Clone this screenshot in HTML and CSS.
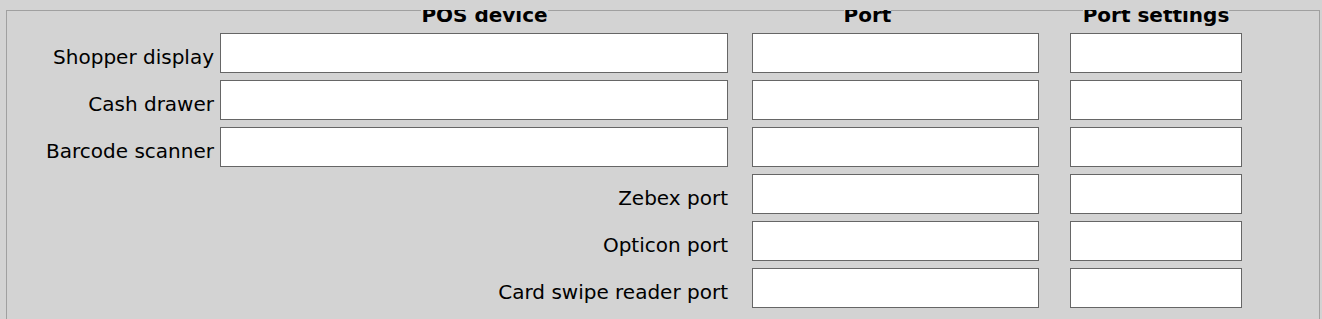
FILE: index.html
```html
<!DOCTYPE html>
<html lang="en">
<head>
  <meta charset="UTF-8" />
  <title>POS devices</title>
  <link rel="stylesheet" href="styles.css">
</head>
<body>
<div class="panel">
  <div class="device-grid">
    <div class="head-blank"></div>
    <div class="head head-pos"><span>POS device</span></div>
    <div class="head head-port"><span>Port</span></div>
    <div class="head head-settings"><span>Port settings</span></div>

    <label class="dev-label">Shopper display</label>
    <input class="field field-pos" type="text">
    <input class="field field-port" type="text">
    <input class="field field-settings" type="text">

    <label class="dev-label">Cash drawer</label>
    <input class="field field-pos" type="text">
    <input class="field field-port" type="text">
    <input class="field field-settings" type="text">

    <label class="dev-label">Barcode scanner</label>
    <input class="field field-pos" type="text">
    <input class="field field-port" type="text">
    <input class="field field-settings" type="text">

    <label class="dev-label wide">Zebex port</label>
    <input class="field field-port" type="text">
    <input class="field field-settings" type="text">

    <label class="dev-label wide">Opticon port</label>
    <input class="field field-port" type="text">
    <input class="field field-settings" type="text">

    <label class="dev-label wide">Card swipe reader port</label>
    <input class="field field-port" type="text">
    <input class="field field-settings" type="text">
  </div>
</div>
</body>
</html>
```

FILE: styles.css
```css
body {
  margin: 10px 2px 0 6px;
  font-family: "DejaVu Sans", Verdana, sans-serif;
  font-size: 20px;
  background: #d3d3d3;
  color: #000;
}

.panel {
  border: 1px solid #a0a0a0;
  box-shadow: 0 0 0 1px #fff;
  height: 400px;
}

.device-grid {
  display: grid;
  grid-template-columns: 213px 508px 24px 287px 31px 172px;
  grid-template-rows: 23px;
  grid-auto-rows: 40px;
  row-gap: 7px;
  margin-top: -8px;
}

.head {
  line-height: 24px;
  font-weight: bold;
  text-align: center;
}

.head span {
  background: #d3d3d3;
}

.head-blank { grid-column: 1; }
.head-pos { grid-column: 2; padding-left: 21px; }
.head-port { grid-column: 4; padding-right: 56px; }
.head-settings { grid-column: 6; }

.dev-label {
  grid-column: 1;
  display: flex;
  align-items: flex-end;
  justify-content: flex-end;
  padding: 0 6px 4px 0;
  line-height: 24px;
  white-space: nowrap;
}

.dev-label.wide {
  grid-column: 1 / 3;
  padding-right: 0;
}

.field {
  box-sizing: border-box;
  height: 40px;
  margin: 0;
  padding: 2px 6px;
  border: 1px solid #666;
  border-radius: 0;
  background: #fff;
  font: inherit;
}

.field-pos { grid-column: 2; width: 508px; }
.field-port { grid-column: 4; width: 287px; }
.field-settings { grid-column: 6; width: 172px; }
```
